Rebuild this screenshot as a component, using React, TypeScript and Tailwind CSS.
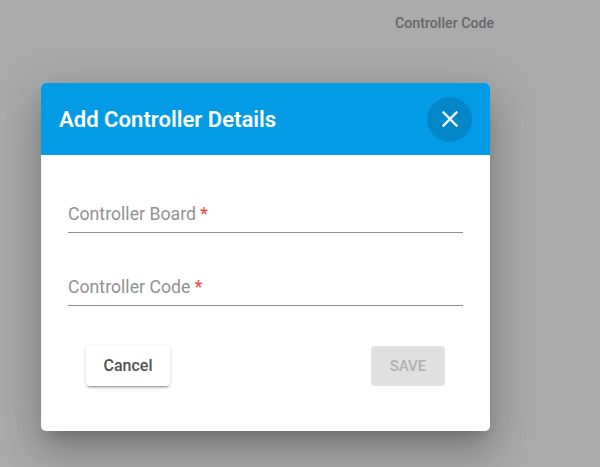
export default function App() {
  return (
    <div className="w-[600px] h-[467px] overflow-hidden bg-[#ababab] font-['Roboto',sans-serif]">
      <div className="h-[83px] pt-[15px] pl-[395px] text-[14.2px] leading-[17px] font-medium text-[#666666]">
        Controller Code
      </div>
      <div className="ml-[41px] w-[449px] h-[348px] rounded-[5px] bg-white overflow-hidden shadow-[0_11px_15px_-7px_rgba(0,0,0,0.2),0_24px_38px_3px_rgba(0,0,0,0.14),0_9px_46px_8px_rgba(0,0,0,0.12)]">
        <div className="h-[72px] bg-[#039be5] flex items-center justify-between pl-[18px] pr-[18px]">
          <span className="text-[22.1px] font-semibold text-white leading-[28px]">Add Controller Details</span>
          <button className="w-[45px] h-[45px] rounded-full bg-[#0288c9] flex items-center justify-center">
            <svg width="28" height="28" viewBox="0 0 24 24" fill="#eef6fb">
              <path d="M19 6.41 17.59 5 12 10.59 6.41 5 5 6.41 10.59 12 5 17.59 6.41 19 12 13.41 17.59 19 19 17.59 13.41 12z" />
            </svg>
          </button>
        </div>
        <div className="px-[27px] pt-[47px]">
          <div className="h-[31px] border-b border-[#8f8f8f] text-[17.7px] leading-[24px] text-[#929292]">
            Controller Board <span className="text-[#f44336]">*</span>
          </div>
          <div className="mt-[41px] h-[32px] pt-px border-b border-[#8f8f8f] text-[17.7px] leading-[24px] text-[#929292]">
            Controller Code <span className="text-[#f44336]">*</span>
          </div>
          <div className="mt-[40px] flex justify-between pl-[18px] pr-[18px]">
            <button className="w-[84px] h-[40px] rounded-[4px] bg-white text-[16px] font-medium text-[#505050] shadow-[0_3px_1px_-2px_rgba(0,0,0,0.2),0_2px_2px_0_rgba(0,0,0,0.14),0_1px_5px_0_rgba(0,0,0,0.12)]">
              Cancel
            </button>
            <button className="w-[74px] h-[40px] rounded-[4px] bg-[#e0e0e0] text-[15px] font-medium text-[#b0b0b0]">
              SAVE
            </button>
          </div>
        </div>
      </div>
    </div>
  );
}
